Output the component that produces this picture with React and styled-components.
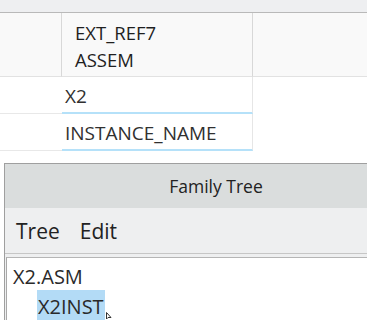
import React from "react";
import styled, { createGlobalStyle } from "styled-components";

const GlobalStyle = createGlobalStyle`
  html, body {
    margin: 0;
    padding: 0;
    background: #ffffff;
    overflow: hidden;
  }
  body {
    font-family: "Open Sans", "Noto Sans", sans-serif;
    color: #262626;
  }
`;

const Page = styled.div`
  width: 367px;
  height: 320px;
  overflow: hidden;
`;

const TopStrip = styled.div`
  height: 12px;
  background: #eeeff1;
  border-bottom: 1px solid #b9b9b9;
`;

const Grid = styled.div`
  display: grid;
  grid-template-columns: 62px 191px 1fr;
`;

const HeadCell = styled.div`
  height: 64px;
  background: #f9f9f9;
  border-bottom: 1px solid #e2e2e2;
  border-right: ${({ $last }) => ($last ? "none" : "1px solid #d8d8d8")};
  padding: 6px 0 0 13px;
  box-sizing: border-box;
  font-size: 18.5px;
  line-height: 27px;
  color: #1f1f1f;
`;

const SideCell = styled.div`
  height: 37px;
  box-sizing: border-box;
  border-bottom: 1px solid #e8e8e8;
`;

const FieldCell = styled.div`
  height: 37px;
  box-sizing: border-box;
  border-right: 1px solid #e6e6e6;
  border-bottom: 2px solid #b5e1f9;
  padding: 3px 0 0 3px;
  display: flex;
  align-items: center;
  font-size: 19px;
  color: #303030;
`;

const EmptyCell = styled.div`
  height: 37px;
`;

const Dialog = styled.div`
  margin: 12px 0 0 4px;
  width: 422px;
  border: 1px solid #9f9f9f;
  border-right: none;
  background: #eeeff0;
`;

const TitleBar = styled.div`
  height: 44px;
  background: #dadddd;
  display: flex;
  align-items: center;
  justify-content: center;
  font-size: 17.5px;
  color: #222;
`;

const MenuBar = styled.div`
  height: 45px;
  display: flex;
  align-items: center;
  gap: 20px;
  padding-left: 11px;
  font-size: 21px;
  color: #222;
  border-bottom: 1px solid #c6c6c6;
`;

const TreePanel = styled.div`
  margin: 3px 0 0 1px;
  height: 80px;
  background: #ffffff;
  border-top: 1px solid #b5b5b5;
  border-left: 1px solid #a8a8a8;
  padding: 6px 0 0 6px;
  font-size: 20px;
  color: #2a2a2a;
`;

const TreeNode = styled.div`
  height: 26px;
  line-height: 26px;
  padding-left: ${({ $depth }) => $depth * 24}px;
`;

const NodeLabel = styled.span`
  display: inline-block;
  padding: 0 1px;
  height: 30px;
  line-height: 34px;
  background: ${({ $selected }) => ($selected ? "#b3dbf6" : "transparent")};
`;

const Cursor = styled.svg`
  vertical-align: bottom;
  margin-left: 1px;
`;

export default function App() {
  return (
    <Page>
      <GlobalStyle />
      <TopStrip />
      <Grid>
        <HeadCell />
        <HeadCell>
          EXT_REF7
          <br />
          ASSEM
        </HeadCell>
        <HeadCell $last />

        <SideCell />
        <FieldCell>X2</FieldCell>
        <EmptyCell />

        <SideCell />
        <FieldCell>INSTANCE_NAME</FieldCell>
        <EmptyCell />
      </Grid>

      <Dialog>
        <TitleBar>Family Tree</TitleBar>
        <MenuBar>
          <span>Tree</span>
          <span>Edit</span>
        </MenuBar>
        <TreePanel>
          <TreeNode $depth={0}>X2.ASM</TreeNode>
          <TreeNode $depth={1}>
            <NodeLabel $selected>X2INST</NodeLabel>
            <Cursor width="6" height="8" viewBox="0 0 6 8">
              <path d="M0.5 0.5 L0.5 7 L2 5.5 L5 5.5 Z" fill="#fff" stroke="#333" strokeWidth="1" />
            </Cursor>
          </TreeNode>
        </TreePanel>
      </Dialog>
    </Page>
  );
}
